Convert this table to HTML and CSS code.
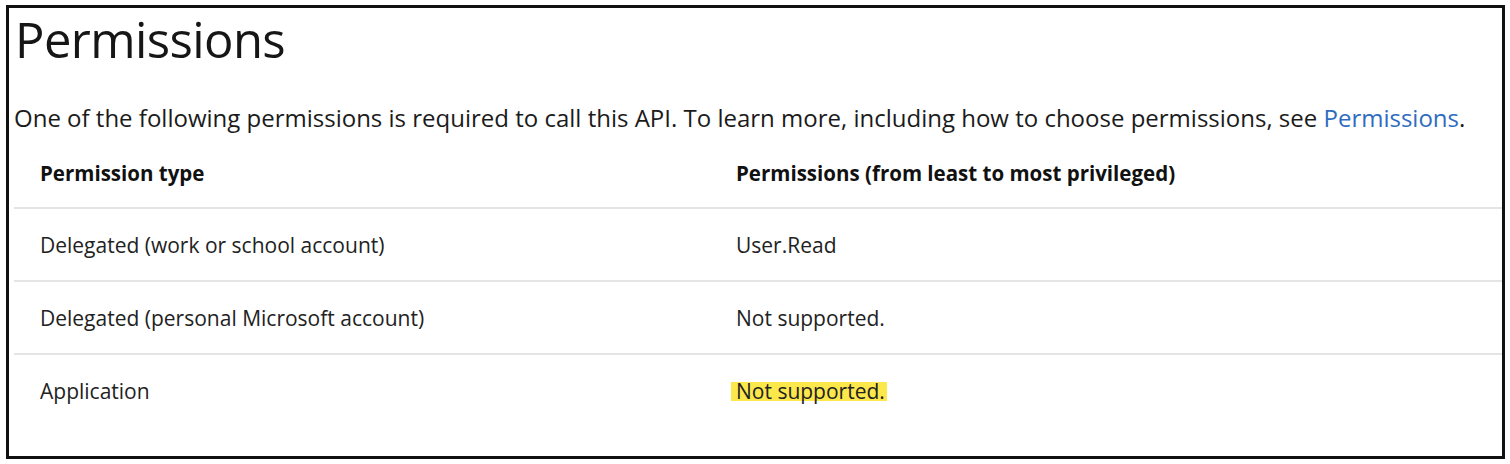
FILE: index.html
```html
<!DOCTYPE html>
<html lang="en">
<head>
<meta charset="utf-8">
<title>Permissions</title>
<link rel="stylesheet" href="styles.css">
</head>
<body>
<div class="frame">
  <h1 class="title">Permissions</h1>
  <p class="intro">One of the following permissions is required to call this API. To learn more, including how to choose permissions, see <a class="link" href="#">Permissions</a>.</p>
  <table class="perm-table">
    <thead>
      <tr>
        <th class="col-type">Permission type</th>
        <th>Permissions (from least to most privileged)</th>
      </tr>
    </thead>
    <tbody>
      <tr>
        <td>Delegated (work or school account)</td>
        <td>User.Read</td>
      </tr>
      <tr>
        <td>Delegated (personal Microsoft account)</td>
        <td>Not supported.</td>
      </tr>
      <tr>
        <td>Application</td>
        <td><span class="mark">Not supported.</span></td>
      </tr>
    </tbody>
  </table>
</div>
</body>
</html>
```
FILE: styles.css
```css
html, body {
  margin: 0;
  padding: 0;
  background: #ffffff;
}

body {
  font-family: "Open Sans", "Noto Sans", "Liberation Sans", sans-serif;
  color: #171717;
}

.frame {
  box-sizing: border-box;
  margin: 5px 0 0 6px;
  width: 1499px;
  height: 454px;
  border: 3px solid #111111;
  padding: 1px 0 0 5px;
}

.title {
  margin: 0;
  font-size: 49px;
  font-weight: 400;
  line-height: 60px;
  letter-spacing: -0.6px;
  color: #161616;
  padding-left: 1px;
}

.intro {
  margin: 34px 0 0 0;
  font-size: 24px;
  line-height: 30px;
  color: #1b1b1b;
}

.link {
  color: #2f6cc0;
  text-decoration: none;
}

.perm-table {
  margin-top: 5px;
  width: 1488px;
  border-collapse: collapse;
  font-size: 21px;
}

.perm-table th {
  text-align: left;
  font-weight: 700;
  font-size: 20.5px;
  height: 69px;
  padding: 0 0 0 26px;
  vertical-align: middle;
  color: #111111;
}

.perm-table .col-type {
  width: 670px;
}

.perm-table td {
  height: 71px;
  padding: 0 0 0 26px;
  border-top: 2px solid #e5e5e5;
  vertical-align: middle;
  color: #222222;
}

.mark {
  display: inline-block;
  background: #fde84c;
  line-height: 19px;
  padding: 0 2px 0 5px;
  margin-left: -5px;
}
```
